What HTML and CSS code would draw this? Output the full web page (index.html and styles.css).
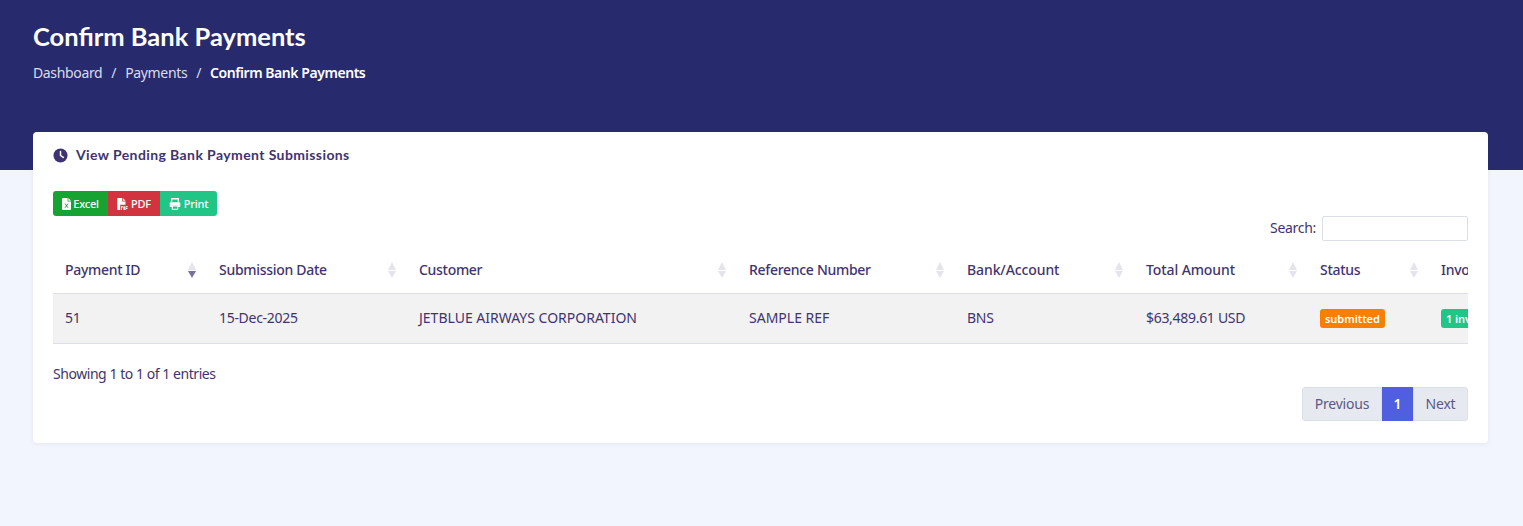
FILE: index.html
```html
<!DOCTYPE html>
<html lang="en">
<head>
    <meta charset="UTF-8">
    <meta name="viewport" content="width=device-width, initial-scale=1.0">
    <title>Confirm Bank Payments</title>
    <link rel="stylesheet" href="styles.css">
</head>
<body>
    <header class="page-header">
        <h1>Confirm Bank Payments</h1>
        <nav class="breadcrumb">
            <a href="#">Dashboard</a>
            <span class="sep">/</span>
            <a href="#">Payments</a>
            <span class="sep">/</span>
            <span class="current">Confirm Bank Payments</span>
        </nav>
    </header>

    <main class="content">
        <section class="card">
            <h2 class="card-title">
                <svg class="clock" viewBox="0 0 16 16" width="15" height="15">
                    <circle cx="8" cy="8" r="7.5" fill="#3f3470"/>
                    <path d="M8 3.6V8l3 2" fill="none" stroke="#fff" stroke-width="1.6" stroke-linecap="round" stroke-linejoin="round"/>
                </svg>
                View Pending Bank Payment Submissions
            </h2>

            <div class="export-buttons">
                <button class="btn btn-excel">
                    <svg viewBox="0 0 12 16" width="9" height="12">
                        <path d="M0 1a1 1 0 0 1 1-1h6.5v4.5H12V15a1 1 0 0 1-1 1H1a1 1 0 0 1-1-1z" fill="#fff"/>
                        <path d="M8.5 0 12 3.5H8.5z" fill="#fff"/>
                        <path d="M4 7.5l4 5.5M8 7.5l-4 5.5" stroke="#16a332" stroke-width="1.3"/>
                    </svg>
                    Excel
                </button>
                <button class="btn btn-pdf">
                    <svg viewBox="0 0 14 16" width="11" height="12">
                        <path d="M0 1a1 1 0 0 1 1-1h5.5v4.5H11V9H4v7H1a1 1 0 0 1-1-1z" fill="#fff"/>
                        <path d="M7.5 0 11 3.5H7.5z" fill="#fff"/>
                        <path d="M5 11h2.5v1.6H6V16H5zM8.2 11h2v5h-2zM11 11h3v1.4h-2v1h1.6v1.2H12V16h-1z" fill="#fff"/>
                    </svg>
                    PDF
                </button>
                <button class="btn btn-print">
                    <svg viewBox="0 0 16 16" width="12" height="12">
                        <path d="M3.5 5V1h9v4" fill="none" stroke="#fff" stroke-width="1.7"/>
                        <path d="M1 6.5a1 1 0 0 1 1-1h12a1 1 0 0 1 1 1V12h-3V9.500H4V12H1z" fill="#fff"/>
                        <path d="M4.500 10.500h7V15h-7z" fill="none" stroke="#fff" stroke-width="1.600"/>
                    </svg>
                    Print
                </button>
            </div>

            <div class="search-row">
                <label for="search">Search:</label>
                <input type="search" id="search">
            </div>

            <div class="table-wrap">
                <table class="data-table">
                    <thead>
                        <tr>
                            <th class="col-id sorted">Payment ID</th>
                            <th class="col-date">Submission Date</th>
                            <th class="col-customer">Customer</th>
                            <th class="col-ref">Reference Number</th>
                            <th class="col-bank">Bank/Account</th>
                            <th class="col-total">Total Amount</th>
                            <th class="col-status">Status</th>
                            <th class="col-invoices">Invoices</th>
                        </tr>
                    </thead>
                    <tbody>
                        <tr>
                            <td>51</td>
                            <td>15-Dec-2025</td>
                            <td class="upper">JETBLUE AIRWAYS CORPORATION</td>
                            <td class="upper">SAMPLE REF</td>
                            <td>BNS</td>
                            <td>$63,489.61 USD</td>
                            <td><span class="badge badge-orange">submitted</span></td>
                            <td><span class="badge badge-green">1 invoice</span></td>
                        </tr>
                    </tbody>
                </table>
            </div>

            <div class="table-info">Showing 1 to 1 of 1 entries</div>

            <div class="pagination">
                <a href="#" class="page-btn prev">Previous</a>
                <a href="#" class="page-btn active">1</a>
                <a href="#" class="page-btn next">Next</a>
            </div>
        </section>
    </main>
</body>
</html>
```

FILE: styles.css
```css
* {
    box-sizing: border-box;
}
body {
    font-family: "Noto Sans", Arial, sans-serif;
    font-size: 14px;
    background-color: #f2f5fd;
    color: #3f3470;
    margin: 0;
    padding: 0;
    min-height: 526px;
}
.page-header {
    height: 170px;
    background-color: #272b6e;
    padding: 20px 33px 0;
    color: #fff;
}
.page-header h1 {
    font-family: Lato, sans-serif;
    font-size: 25.5px;
    line-height: 32px;
    font-weight: 700;
    margin: 0 0 10px;
}
.breadcrumb {
    display: flex;
    gap: 9px;
    font-size: 14px;
    line-height: 22px;
    letter-spacing: -0.35px;
}
.breadcrumb a {
    color: #dcdcec;
    text-decoration: none;
}
.breadcrumb .sep {
    color: #dcdcec;
}
.breadcrumb .current {
    color: #fff;
    font-weight: 600;
    letter-spacing: -0.45px;
}
.content {
    padding: 0 35px 0 33px;
    margin-top: -38px;
}
.card {
    height: 311px;
    background: #fff;
    border-radius: 4px;
    box-shadow: 0 1px 4px rgba(60, 70, 140, 0.08);
    padding: 12px 20px 0;
}
.card-title {
    display: flex;
    align-items: center;
    gap: 8px;
    font-family: Lato, sans-serif;
    font-size: 14px;
    line-height: 22px;
    font-weight: 700;
    margin: 0;
    letter-spacing: 0.4px;
}
.export-buttons {
    display: flex;
    margin-top: 25px;
}
.btn {
    display: flex;
    align-items: center;
    gap: 2px;
    height: 25px;
    border: none;
    color: #fff;
    font-family: "Noto Sans", Arial, sans-serif;
    font-size: 11px;
    font-weight: 500;
    padding: 0;
    justify-content: center;
    letter-spacing: -0.2px;
}
.btn-excel {
    width: 55px;
    background-color: #16a332;
    border-radius: 3px 0 0 3px;
}
.btn-pdf {
    width: 52px;
    gap: 3px;
    background-color: #d1343f;
}
.btn-print {
    width: 57px;
    gap: 3px;
    background-color: #21c585;
    border-radius: 0 3px 3px 0;
}
.search-row {
    display: flex;
    justify-content: flex-end;
    align-items: center;
    gap: 6px;
    height: 25px;
}
.search-row label {
    font-size: 14px;
    line-height: 22px;
    margin-top: -1px;
    letter-spacing: -0.3px;
}
.search-row input {
    width: 146px;
    height: 25px;
    border: 1px solid #dcdfe8;
    border-radius: 2px;
    background: #fff;
    padding: 0 6px;
}
.table-wrap {
    overflow: hidden;
    margin-top: 7px;
}
.data-table {
    table-layout: fixed;
    width: 1500px;
    border-collapse: collapse;
    font-size: 14px;
    letter-spacing: -0.3px;
}
.col-id { width: 154px; }
.col-date { width: 200px; }
.col-customer { width: 330px; }
.col-ref { width: 218px; }
.col-bank { width: 179px; }
.col-total { width: 174px; }
.col-status { width: 121px; }
.col-invoices { width: 124px; }
.col-bank, .col-total {
    letter-spacing: -0.1px;
}
.data-table th {
    position: relative;
    height: 45px;
    padding: 0 12px 2px;
    text-align: left;
    font-weight: 500;
    border-bottom: 1px solid #dcdfe8;
}
/* sort arrows */
.data-table th::before,
.data-table th::after {
    content: "";
    position: absolute;
    right: 11px;
    width: 0;
    height: 0;
    border-left: 4px solid transparent;
    border-right: 4px solid transparent;
}
.data-table th::before {
    top: 14px;
    border-bottom: 8px solid #e4e4ec;
}
.data-table th::after {
    top: 23px;
    border-top: 7px solid #e4e4ec;
}
.data-table th.sorted::after {
    border-top-color: #7a7399;
}
.data-table td {
    height: 50px;
    padding: 0 12px 2px;
    background-color: #f2f2f2;
    border-bottom: 1px solid #dcdfe8;
    white-space: nowrap;
}
.data-table td.upper {
    letter-spacing: 0;
}
.badge {
    display: inline-block;
    height: 19px;
    line-height: 19px;
    margin-top: 2px;
    padding: 0 5px;
    border-radius: 3px;
    color: #fff;
    font-size: 11px;
    font-weight: 600;
    letter-spacing: -0.05px;
    vertical-align: middle;
}
.badge-orange {
    background-color: #f97f00;
}
.badge-green {
    background-color: #21c585;
}
.table-info {
    margin-top: 19px;
    line-height: 22px;
    letter-spacing: -0.45px;
}
.pagination {
    display: flex;
    justify-content: flex-end;
    margin-top: 2px;
}
.page-btn {
    height: 34px;
    line-height: 32px;
    text-decoration: none;
    text-align: center;
    background-color: #e6e9f0;
    border: 1px solid #dcdfe8;
    color: #5d5785;
    letter-spacing: -0.2px;
}
.page-btn.prev {
    width: 80px;
    border-radius: 3px 0 0 3px;
}
.page-btn.active {
    width: 31px;
    background-color: #4f5fe0;
    border-color: #4f5fe0;
    color: #fff;
    font-weight: 600;
}
.page-btn.next {
    width: 55px;
    border-radius: 0 3px 3px 0;
}
```
